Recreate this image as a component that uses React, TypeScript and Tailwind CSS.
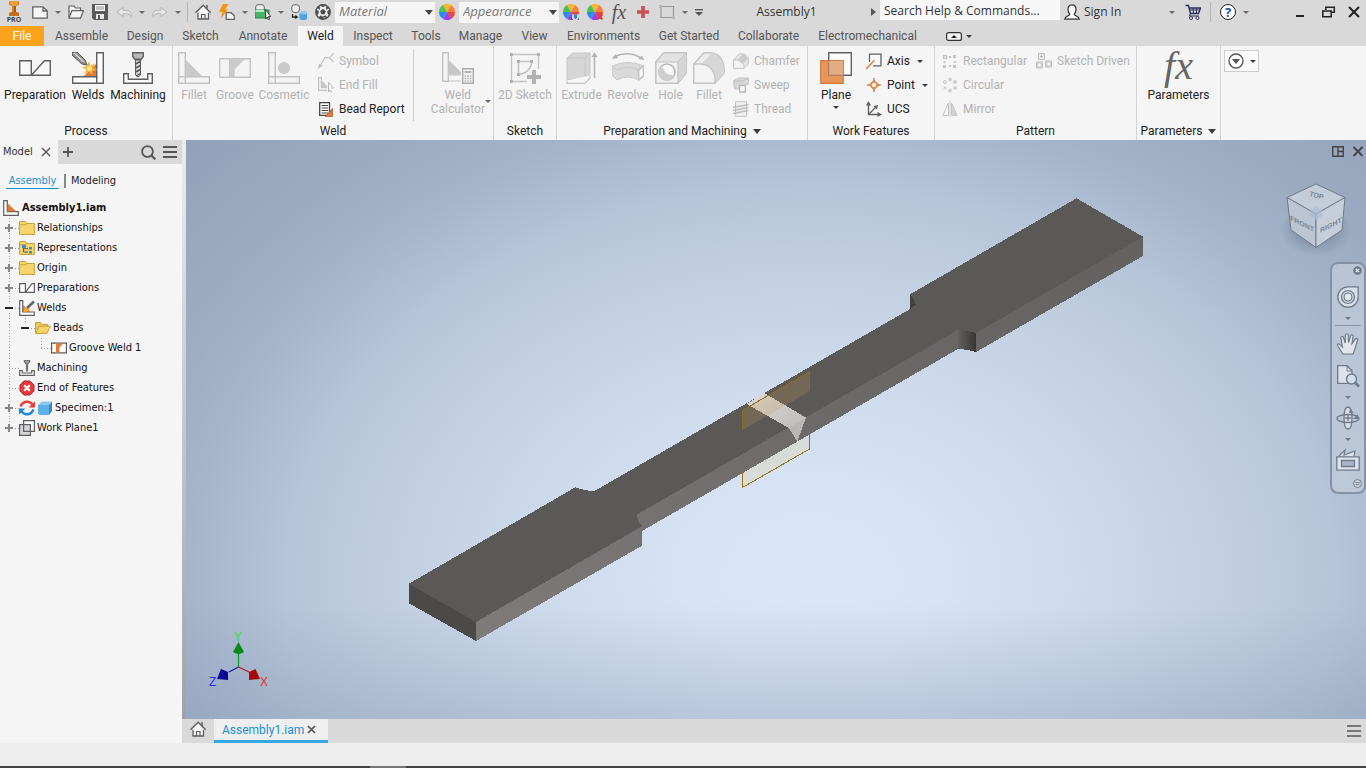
import React from "react";

type IconProps = { w?: number; h?: number; className?: string; children?: React.ReactNode };

const Svg = ({ w = 16, h = 16, className = "", children }: IconProps) => (
  <svg width={w} height={h} viewBox={`0 0 ${w} ${h}`} fill="none" aria-hidden="true" className={`block shrink-0 ${className}`}>
    {children}
  </svg>
);

const Caret = ({ big = false, color = "#3c3c3c" }: { big?: boolean; color?: string }) =>
  big ? (
    <Svg w={8} h={5}><path d="M0 0H8L4 5Z" fill={color} /></Svg>
  ) : (
    <Svg w={6} h={3}><path d="M0 0H6L3 3Z" fill={color} /></Svg>
  );

const G = "#5f5f5f";
const D = "#c3c3c3";

/* ---------- quick access icons ---------- */

const LogoIcon = () => (
  <div className="flex w-7 flex-col items-center">
    <Svg w={12} h={15}>
      <path d="M1 0H11V4L8 5V11L11 12V15H1V12L4 11V5L1 4Z" fill="#d9822b" />
      <path d="M1 0H11L8 5H4Z" fill="#ef9d3e" />
      <path d="M6 5H8V11H6Z" fill="#a85a14" />
      <path d="M1 12L4 11H8L11 12V15H1Z" fill="#c56f1c" />
    </Svg>
    <span className="text-[7px] font-bold leading-[7px] text-[#444]">PRO</span>
  </div>
);
const NewIcon = () => <Svg><path d="M.8 2.8H11L15.2 7V14.2H.8Z" fill="#f5f5f5" stroke={G} strokeWidth="1.3" /><path d="M11 3V7H15" stroke={G} strokeWidth="1.3" /></Svg>;
const OpenIcon = () => <Svg><path d="M1 14V2H6L7.5 4H12.5V6.5" fill="#f5f5f5" stroke={G} strokeWidth="1.2" /><path d="M1 14.2L4 6.6H15.5L12.5 14.2Z" fill="#f5f5f5" stroke={G} strokeWidth="1.2" /></Svg>;
const SaveIcon = () => (
  <Svg><path d="M0 0H16V16H2L0 14Z" fill="#5a5a5a" /><path d="M3 1H13V7H3Z" fill="#fff" /><path d="M4 3H12M4 5H12" stroke="#888" /><path d="M4 10H12V15H4Z" fill="#ececec" /><path d="M6 11H8V15H6Z" fill="#5a5a5a" /></Svg>
);
const UndoIcon = ({ flip = false }: { flip?: boolean }) => (
  <Svg className={flip ? "-scale-x-100" : ""}><path d="M1 8L7 3.5V6.3H11Q15.3 6.5 15.3 12.5Q13 9.8 11 9.8H7V12.5Z" fill="#e6e6e6" stroke="#b4b4b4" /></Svg>
);
const HomeIcon = () => (
  <Svg><path d="M3 8V15H13.5V8" fill="#f5f5f5" stroke={G} strokeWidth="1.3" /><path d="M.5 8.8L8.2 1.2L15.7 8.8" fill="#f5f5f5" stroke={G} strokeWidth="1.4" /><path d="M12 1V5" stroke={G} strokeWidth="1.5" /><path d="M6.5 15V10.5H10V15" stroke={G} strokeWidth="1.2" /></Svg>
);
const UpdateIcon = () => (
  <Svg><path d="M4 0H9.5L6 5.5H9L1.5 15L3.5 8H0Z" fill="#f9930f" /><path d="M7.2 8.7H12L15.3 11.5V15.3H7.2Z" fill="#f5f5f5" stroke={G} strokeWidth="1.2" /></Svg>
);
const SelectIcon = () => (
  <Svg><rect x=".7" y=".7" width="8.6" height="9" rx="2.5" fill="#eee" stroke={G} /><rect x="0" y="6" width="14" height="8" fill="#45b56b" stroke="#2d8d4d" /><path d="M.5 6H9V8H.5Z" fill="#bfe3cb" /><path d="M10.5 5.5V15L12.2 13L13.5 16L14.6 15.3L13.4 12.5H15.8Z" fill="#fff" stroke="#333" strokeWidth=".9" /></Svg>
);
const ReplaceIcon = () => (
  <Svg><rect x=".8" y=".8" width="7.6" height="7.6" rx="2.5" fill="#f0f0f0" stroke={G} /><path d="M1.5 10V13H5" stroke="#222" strokeWidth="1.3" /><path d="M4.3 10.8L7.3 13L4.3 15.2Z" fill="#222" /><rect x="8.5" y="7.5" width="7.5" height="8.5" rx="2" fill="#4fa3e0" /><ellipse cx="12.3" cy="8.7" rx="3.6" ry="1.5" fill="#92c9f2" /></Svg>
);
const BallIcon = () => (
  <Svg><circle cx="8" cy="8" r="7.2" fill="#f2f2f2" stroke="#4a4a4a" strokeWidth="1.4" /><path d="M8 5.3L10.4 7L9.5 10H6.5L5.6 7ZM5.5 1.2L8 3L10.5 1.2ZM1.2 6L3.4 7.2L3 10L1.6 10.5ZM14.8 6L12.6 7.2L13 10L14.4 10.5ZM4 13.6L5.5 11.7L8 13L8.2 15.2ZM12 13.6L10.5 11.7L8 13ZM2.6 3L5 3.6L4.2 5.6ZM13.4 3L11 3.6L11.8 5.6Z" fill="#4a4a4a" stroke="#4a4a4a" strokeWidth=".7" /></Svg>
);
const Wheel = ({ badge }: { badge?: "down" | "x" }) => (
  <Svg>
    <path d="M8 8L4 1.1A8 8 0 0 1 12 1.1Z" fill="#f8b62d" />
    <path d="M8 8L12 1.1A8 8 0 0 1 16 8Z" fill="#f5813f" />
    <path d="M8 8H16A8 8 0 0 1 12 14.9Z" fill="#e9483f" />
    <path d="M8 8L12 14.9A8 8 0 0 1 4 14.9Z" fill="#9a3df0" />
    <path d="M8 8L4 14.9A8 8 0 0 1 0 8Z" fill="#2e8ceb" />
    <path d="M8 8H0A8 8 0 0 1 4 1.1Z" fill="#4cc356" />
    {badge === "down" && <><path d="M9 10.5H16V16H9Z" fill="#d9d9d9" /><path d="M11 10.5H14V13.5L12.5 15.5L11 13.5Z" fill="#1f88d9" /><path d="M8.5 13.5V15.5H10M16 13.5V15.5H14.8" stroke="#555" /></>}
    {badge === "x" && <path d="M10.5 10.5L15.3 15.3M15.3 10.5L10.5 15.3" stroke="#e53935" strokeWidth="2" />}
  </Svg>
);
const AddIcon = () => <Svg><path d="M6.2 2H9.8V6.2H14V9.8H9.8V14H6.2V9.8H2V6.2H6.2Z" fill="#c9504e" /></Svg>;
const RectIcon = () => <Svg><path d="M2 2.5H14.5V13.5H2Z" stroke="#9a9a9a" strokeWidth="1.2" /><path d="M0 1H3.5V4H0ZM13 12.5H16V15H13Z" fill="#b8b8b8" /></Svg>;
const CartIcon = () => <Svg><path d="M.5 1.5H3.5L5.5 9.5H13.5L15.5 4H4.2" stroke="#27305c" strokeWidth="1.4" /><path d="M5 6H15M8 4L8.5 9M11.5 4V9M5.5 9.5L4.5 12H14" stroke="#27305c" /><circle cx="6" cy="14" r="1.5" fill="#fff" stroke="#27305c" /><circle cx="12.5" cy="14" r="1.5" fill="#fff" stroke="#27305c" /></Svg>;
const UserIcon = () => <Svg><path d="M8 .8C11 .8 12 3 12 5.5C12 8 10.7 9.3 10.3 10.3C10.5 11.8 15 12 15.3 15.2H.7C1 12 5.5 11.8 5.7 10.3C5.3 9.3 4 8 4 5.5C4 3 5 .8 8 .8Z" fill="#fafafa" stroke="#333" strokeWidth="1.2" /></Svg>;

/* ---------- ribbon icons, 32px ---------- */

const PreparationIcon = () => <Svg w={32} h={32}><path d="M.7 8.7H12.3V23.3H.7ZM12.3 23.3L25.5 8.7H31.3V23.3Z" fill="#f8f8f8" stroke={G} strokeWidth="1.4" /></Svg>;
const WeldsIcon = () => (
  <Svg w={32} h={32}>
    <path d="M24.7.7H31.3V31.3H.7V24.7H24.7Z" fill="#fafafa" stroke={G} strokeWidth="1.4" /><path d="M24.7 24.7V31" stroke={G} strokeWidth="1.4" />
    <path d="M24 12V24H12Z" fill="#e07b35" />
    <path d="M17 9L18.5 14L23 11L21 15.5L25 18L20.5 18.5L20 23L17 19.5L12 22L14.5 17.5L10 15.5L15 14Z" fill="#fbb324" />
    <circle cx="17.5" cy="16.5" r="2.5" fill="#ffe89a" />
    <path d="M0 0H5L13 8L15 13L10 12L0 3Z" fill="#8e8e8e" stroke="#555" /><path d="M2 1L12 10" stroke="#d6d6d6" strokeWidth="1.5" />
  </Svg>
);
const MachiningIcon = () => (
  <Svg w={32} h={32}>
    <path d="M1.7 21.7H6.3V27.3H25.7V21.7H30.3V31.3H1.7Z" fill="#fafafa" stroke={G} strokeWidth="1.4" />
    <path d="M10.7.7H21.3V4.5L19.3 7.3H12.7L10.7 4.5Z" fill="#b9b9b9" stroke={G} strokeWidth="1.4" />
    <path d="M13.5 8H18.5V23L16 25L13.5 23Z" fill="#d4d4d4" stroke={G} /><path d="M13.5 12L18.5 9.5M13.5 16L18.5 13.5M13.5 20L18.5 17.5M14 24L18.5 21.5" stroke="#555" strokeWidth="1.4" />
  </Svg>
);
const FilletIcon = () => <Svg w={32} h={32}><path d="M.7.7H7.3V24.7H31.3V31.3H.7Z" fill="#f4f4f4" stroke={D} strokeWidth="1.4" /><path d="M.7 24.7H7.3V31" stroke={D} strokeWidth="1.4" /><path d="M8 8L24 24H8Z" fill="#cacaca" /></Svg>;
const GrooveIcon = () => <Svg w={32} h={32}><path d="M.7 6.7H31.3V25.3H.7Z" fill="#f4f4f4" stroke={D} strokeWidth="1.4" /><path d="M10 7H25L15 17V25H10Z" fill="#cacaca" /><path d="M10.5 7V25M25.5 7L15 17.5V25" stroke={D} /></Svg>;
const CosmeticIcon = () => <Svg w={32} h={32}><path d="M.7.7H7.3V24.7H31.3V31.3H.7Z" fill="#f4f4f4" stroke={D} strokeWidth="1.4" /><path d="M.7 24.7H7.3V31" stroke={D} strokeWidth="1.4" /><circle cx="16" cy="16" r="6" fill="#cacaca" /></Svg>;
const CalculatorIcon = () => (
  <Svg w={32} h={32}><path d="M.7.7H6.3V29.3H.7Z" fill="#f4f4f4" stroke={D} strokeWidth="1.4" /><path d="M6.3 7.5L19 20V22.5H6.3Z" fill="#c6c6c6" /><path d="M6.3 23H19M6.3 29H19" stroke={D} strokeWidth="1.2" /><path d="M20.7 16.7H31.3V31.3H20.7Z" fill="#f4f4f4" stroke="#aaa" strokeWidth="1.4" /><path d="M22.5 20H29.5" stroke="#b5b5b5" strokeWidth="2" /><path d="M22.6 24H29.8M22.6 26.5H29.8M22.6 29H29.8" stroke="#b5b5b5" strokeWidth="1.6" strokeDasharray="1.6 1" /></Svg>
);
const SketchIcon = () => (
  <Svg w={32} h={32}><path d="M2.5 2.5H29.5V17M2.5 2.5V29.5H18" stroke={D} strokeWidth="1.3" /><path d="M1 1H4V4H1ZM28 1H31V4H28ZM1 28H4V31H1Z" fill="#b2b2b2" /><path d="M9.5 9.5H22.5V12Q21 20 11 22.5H9.5Z" stroke={D} strokeWidth="1.5" /><path d="M8 8H11V11H8ZM21 8H24V11H21ZM8 21H11V24H8Z" fill="#b2b2b2" /><path d="M23 18H27V23H32V27H27V32H23V27H18V23H23Z" fill="#b2b2b2" /></Svg>
);
const ExtrudeIcon = () => (
  <Svg w={32} h={32}><path d="M1 6L7 1H24V22L19 27.5H1Z" fill="#d6d6d6" stroke="#c6c6c6" /><path d="M1 6H19L24 1M19 6V27" stroke="#c6c6c6" /><path d="M1 28.5V31.3H19L24 26V23.5" fill="#f7f7f7" stroke={D} strokeWidth="1.2" /><path d="M28.5 26V4" stroke="#b2b2b2" strokeWidth="1.6" /><path d="M28.5 0L31.5 5H25.5Z" fill="#b2b2b2" /></Svg>
);
const RevolveIcon = () => (
  <Svg w={32} h={32}><path d="M2 5Q16-2 29 6" stroke="#b4b4b4" strokeWidth="1.6" /><path d="M0 6.5L3.5 2L6 6.5ZM32 8L26.5 7L30 3.5Z" fill="#b4b4b4" /><path d="M0 14Q16 7 32 14L31 25L27 28Q16 22 5 28L0 23Z" fill="#dadada" stroke="#c9c9c9" /><path d="M0 14L5 18Q16 13 26.5 18L32 13" stroke="#c9c9c9" /><path d="M26.7 18L31.3 14V24L26.7 28Z" fill="#fafafa" stroke={D} strokeWidth="1.4" /></Svg>
);
const HoleIcon = () => (
  <Svg w={32} h={32}><path d="M.8 10L8.5.8H31.2V21L23 31.2H.8Z" fill="#e2e2e2" stroke={D} strokeWidth="1.4" /><path d="M23 10L31 1V21L23 31Z" fill="#d6d6d6" /><path d="M1 10H23V31H1Z" fill="#f1f1f1" stroke={D} strokeWidth="1.2" /><path d="M23 10L31 1" stroke={D} /><circle cx="12" cy="20" r="8" fill="#fafafa" stroke="#b8b8b8" strokeWidth="1.6" /><path d="M7 14A8 8 0 1 0 19 23Q10 24 7 14Z" fill="#cfcfcf" /></Svg>
);
const Fillet3dIcon = () => (
  <Svg w={32} h={32}><path d="M.8 12L11 .8H16Q30 1 31.2 17V21L22 31.2H.8Z" fill="#ececec" stroke={D} strokeWidth="1.4" /><path d="M11 1H16Q30 1 31 18V21L22 31V26Q21 13 9 11.5L18 2Z" fill="#d6d6d6" /><path d="M.8 12H8Q21 13 22 27V31.2H.8Z" fill="#f3f3f3" stroke={D} strokeWidth="1.3" /></Svg>
);
const PlaneIcon = () => (
  <Svg w={32} h={32}><path d="M8.7.7H31.3V23.3H8.7Z" fill="#fff" stroke={G} strokeWidth="1.4" /><path d="M.7 8.7H23.3V31.3H.7Z" fill="#e89558" stroke="#cf7b3d" strokeWidth="1.2" /><path d="M9 9H23V23H9Z" fill="#e2ac85" /><path d="M8.7 8.7V23.3H23.3" stroke="#9a7b66" /></Svg>
);

/* ---------- ribbon icons, 16px ---------- */

const SymbolIcon = () => <Svg><path d="M1.5 14L7 4.7H11.5M15.5.5L11.5 4.7L15.5 9" stroke={D} strokeWidth="1.2" /><path d="M0 16L1 10.5L4.8 12.8Z" fill={D} /></Svg>;
const EndFillIcon = () => <Svg><path d="M.6.6H3.4V10.6H9M.6.6V13.4H9" stroke={D} strokeWidth="1.2" /><path d="M3.5 3L10 10H3.5Z" fill="#c8c8c8" /><path d="M10.5 5.5V15L12.3 13L13.5 15.8M10.5 5.5L15.3 11H13" fill="#fff" stroke="#b5b5b5" /></Svg>;
const BeadIcon = () => <Svg><path d="M1.7 1.7H11.5V14.3H1.7Z" fill="#fff" stroke="#444" strokeWidth="1.3" /><path d="M3.5 4.5H10M3.5 7H10M3.5 9.5H10M3.5 12H10" stroke="#444" strokeWidth="1.2" /><path d="M14.5 7.5V15.5H7.5Z" fill="#e07b35" stroke="#a95012" strokeWidth=".7" /></Svg>;
const ChamferIcon = () => <Svg><path d="M.7 7L6 1H11.5L15.3 5V11L11 15.3H.7Z" fill="#e6e6e6" stroke={D} /><path d="M4 7L10.5 1L15 5L11 10Z" fill="#cbcbcb" /><path d="M.7 7H5L11 11.5V15.3H.7Z" fill="#f4f4f4" stroke={D} /></Svg>;
const SweepIcon = () => <Svg><path d="M.5 4L5 1H15.5V7L10 8H6V12H1.5Z" fill="#d6d6d6" stroke="#c6c6c6" /><path d="M.5 4H9L15 1.5" stroke="#c0c0c0" /><path d="M6.6 8.6H12.4V15H6.6Z" fill="#f7f7f7" stroke="#b8b8b8" strokeWidth="1.3" /></Svg>;
const ThreadIcon = () => <Svg><path d="M2.5.7H13.5V15.3H2.5Z" fill="#f0f0f0" stroke={D} /><path d="M0 6.5L15.5 3.5M0 9.5L15.5 6.5M0 12.5L15.5 9.5" stroke="#bdbdbd" strokeWidth="1.5" /></Svg>;
const AxisIcon = () => <Svg><path d="M3.5 9V1.2H15V12.8H7" fill="#fafafa" stroke={G} strokeWidth="1.3" /><path d="M0 16L8.5 7.2" stroke="#e07b35" strokeWidth="1.5" /></Svg>;
const PointIcon = () => <Svg><path d="M8 1V15M1 8H15" stroke="#d9803f" strokeWidth="1.4" /><path d="M8 3.2L12.8 8L8 12.8L3.2 8Z" fill="#e89558" stroke="#cf7b3d" /><path d="M6.3 6.3H9.7V9.7H6.3Z" fill="#fff" /></Svg>;
const UcsIcon = () => <Svg><path d="M2.5 3V13.5H13" stroke={G} strokeWidth="1.4" /><path d="M2.5 0L5 4.5H0ZM16 13.5L11.5 16V11ZM12 4L11 8.5L7.5 5Z" fill={G} /><path d="M3 13L10 6" stroke={G} strokeWidth="1.3" /></Svg>;
const RectPatternIcon = () => <Svg><path d="M1.6 2.6H4.4V5.4H1.6Z" stroke={D} strokeWidth="1.3" /><path d="M7 3H9V5H7ZM11 2H14V5H11ZM1.5 8H3.5V10H1.5ZM1 12H4V15H1ZM7 12H9V14H7ZM11 12H14V15H11ZM12 8H14V10H12Z" fill="#c6c6c6" /></Svg>;
const CircPatternIcon = () => <Svg><circle cx="8" cy="2.5" r="2" fill="#cfcfcf" /><circle cx="13" cy="5" r="2" fill="#cfcfcf" /><circle cx="13" cy="11" r="2" fill="#cfcfcf" /><circle cx="8" cy="13.5" r="2" fill="#cfcfcf" /><circle cx="3" cy="11" r="1.6" fill="#cfcfcf" /><circle cx="3" cy="5" r="1.5" stroke={D} /></Svg>;
const MirrorIcon = () => <Svg><path d="M6.5 2V14.4H.9Z" fill="#f6f6f6" stroke={D} /><path d="M9.5 2V14.4H15.1Z" fill="#d3d3d3" stroke={D} /><path d="M8 0V16" stroke="#cfcfcf" /></Svg>;
const SketchDrivenIcon = () => <Svg><path d="M2.6.6H8.4V6.4H2.6Z" fill="#fafafa" stroke={D} strokeWidth="1.2" /><path d="M5.5 2V5M4 3.5H7" stroke="#b5b5b5" /><path d="M.5 9H6.5V15H.5ZM9.5 8H15.5V14H9.5Z" fill="#d3d3d3" stroke={D} /><path d="M3.5 10.5V13.5M2 12H5M12.5 9.5V12.5M11 11H14" stroke="#fff" /></Svg>;

/* ---------- browser tree icons ---------- */

const AsmIcon = () => <Svg><path d="M.7.7H4.3V11.7H15.3V15.3H.7Z" fill="#fff" stroke={G} strokeWidth="1.2" /><path d="M4.8 3.5L13 11.3H4.8Z" fill="#e07b35" /></Svg>;
const FolderIcon = ({ rep = false }: { rep?: boolean }) => (
  <Svg><path d="M.6 1.6H6.5L8 3.5H15.4V14.4H.6Z" fill="#f6d56a" stroke="#c9a13a" /><path d="M.6 4.8H6.5L8 3.5" stroke="#c9a13a" />{rep && <><path d="M4.5 6.5V12H9M4.5 8.7H9" stroke="#555" /><path d="M3 5H7V8H3ZM10 7H13V9.5H10ZM10 11H13V13.5H10Z" fill="#3a8fd0" /></>}</Svg>
);
const OpenFolderIcon = () => <Svg><path d="M.6 13.4V2.6H5.5L7 4.4H12.5V6.5" fill="#edc75a" stroke="#c9a13a" /><path d="M.8 13.4L4.2 6.2H15.3L11.9 13.4Z" fill="#f6d56a" stroke="#c9a13a" /></Svg>;
const PrepSmallIcon = () => <Svg><path d="M.6 3.6H6.4V12.4H.6ZM6.4 12.4L13 3.6H15.4V12.4Z" fill="#fff" stroke={G} strokeWidth="1.2" /></Svg>;
const WeldSmallIcon = () => <Svg><path d="M.7.7H3.7V12H15.3V15.3H.7Z" fill="#fff" stroke={G} strokeWidth="1.2" /><path d="M4 5L12 12H4Z" fill="#e07b35" /><path d="M6 6L7 9L11 8L9 11L5 12Z" fill="#fbb324" /><path d="M8 8L15 1.5" stroke="#666" strokeWidth="2.6" /></Svg>;
const GrooveSmallIcon = () => <Svg><path d="M.6 3.1H15.4V12.9H.6Z" fill="#fff" stroke={G} strokeWidth="1.2" /><path d="M5 3.5H12L8.5 7.5V12.5H5Z" fill="#e07b35" /></Svg>;
const MachSmallIcon = () => <Svg><path d="M.7 10.7H3.3V13H12.7V10.7H15.3V15.4H.7Z" fill="#fff" stroke={G} strokeWidth="1.2" /><path d="M5 .7H11L9.8 3.3H6.2Z" fill="#aaa" stroke={G} /><path d="M8 4V11.5" stroke="#777" strokeWidth="2.4" /></Svg>;
const EndIcon = () => <Svg><path d="M5 1H11L15 5V11L11 15H5L1 11V5Z" fill="#e5393b" stroke="#b92426" /><path d="M5.2 5.2L10.8 10.8M10.8 5.2L5.2 10.8" stroke="#fff" strokeWidth="2.2" /></Svg>;
const AdaptiveIcon = () => <Svg><path d="M1.5 6.5Q4 1 9 1.8Q12 2.4 13.5 4.5" stroke="#ef3b36" strokeWidth="2.4" /><path d="M16 1.5V7.5H9.5Z" fill="#ef3b36" /><path d="M14.5 9.5Q12 15 7 14.2Q4 13.6 2.5 11.5" stroke="#1f86d8" strokeWidth="2.4" /><path d="M0 14.5V8.5H6.5Z" fill="#1f86d8" /></Svg>;
const CubeIcon = () => <Svg><path d="M1 5L4.5 1.5H15L12 5Z" fill="#8ccaf0" /><path d="M1 5H12V15H3L1 13.5Z" fill="#5db1e6" /><path d="M12 5L15 1.5V11L12 15Z" fill="#3c88bf" /></Svg>;
const WorkPlaneIcon = () => <Svg><path d="M4.6.6H15.4V11.4H4.6Z" fill="#fafafa" stroke={G} strokeWidth="1.2" /><path d="M.6 4.6H11.4V15.4H.6Z" fill="#cfcfd2" fillOpacity=".85" stroke={G} strokeWidth="1.2" /><path d="M4.6 4.6V11.4H11.4" stroke={G} strokeWidth="1.2" /></Svg>;

/* ---------- shared controls ---------- */

const QuickButton = ({ label, children }: { label: string; children: React.ReactNode }) => (
  <button type="button" aria-label={label} className="flex h-6 w-6 shrink-0 items-center justify-center">{children}</button>
);
const QuickCaret = ({ label }: { label: string }) => (
  <button type="button" aria-label={label} className="flex h-6 w-3 shrink-0 items-center justify-center"><Caret color="#6a6a6a" /></button>
);

const Combo = ({ label }: { label: string }) => (
  <label className="relative flex h-[21px] w-[100px] shrink-0 items-center bg-[#f5f5f5]">
    <select aria-label={label} className="h-full w-full appearance-none bg-transparent px-1 font-['Open_Sans',sans-serif] text-[13px] italic text-[#7a7a7a] outline-none">
      <option>{label}</option>
    </select>
    <span className="pointer-events-none absolute right-0.5"><Caret big color="#444" /></span>
  </label>
);

const BigButton = ({ label, width, disabled = false, caret = false, children }: { label: string; width: string; disabled?: boolean; caret?: boolean; children: React.ReactNode }) => (
  <button type="button" disabled={disabled} className={`flex shrink-0 flex-col items-center pt-1.5 ${width} ${disabled ? "text-[#b3b3b3]" : "text-[#222]"}`}>
    {children}
    <span className="mt-1 whitespace-nowrap leading-[14px]">{label}</span>
    {caret && <span className="mt-1"><Caret /></span>}
  </button>
);

const SmallButton = ({ label, disabled = false, caret = false, children }: { label: string; disabled?: boolean; caret?: boolean; children: React.ReactNode }) => (
  <button type="button" disabled={disabled} className={`flex h-6 items-center gap-[5px] whitespace-nowrap ${disabled ? "text-[#b3b3b3]" : "text-[#222]"}`}>
    {children}
    <span>{label}</span>
    {caret && <span className="ml-0.5"><Caret /></span>}
  </button>
);

const Panel = ({ label, width, caret = false, children }: { label: string; width: string; caret?: boolean; children: React.ReactNode }) => (
  <section aria-label={label} className={`flex shrink-0 flex-col border-r border-[#d4d4d4] ${width}`}>
    <div className="flex flex-1">{children}</div>
    <div className="flex h-[18px] items-center justify-center gap-1.5 text-[#222]">
      {label}
      {caret && <Caret big />}
    </div>
  </section>
);

const SmallColumn = ({ className = "", children }: { className?: string; children: React.ReactNode }) => (
  <div className={`flex flex-col items-start pt-[3px] ${className}`}>{children}</div>
);

/* ---------- page sections ---------- */

const TitleBar = () => (
  <header className="flex h-6 items-center bg-[#d9d9d9] font-['Open_Sans','Noto_Sans',sans-serif] text-[12px] text-[#333]">
    <LogoIcon />
    <QuickButton label="New"><NewIcon /></QuickButton>
    <QuickCaret label="New options" />
    <QuickButton label="Open"><OpenIcon /></QuickButton>
    <QuickButton label="Save"><SaveIcon /></QuickButton>
    <QuickButton label="Undo"><UndoIcon /></QuickButton>
    <QuickCaret label="Undo history" />
    <QuickButton label="Redo"><UndoIcon flip /></QuickButton>
    <QuickCaret label="Redo history" />
    <span className="mx-[3px] h-5 w-px bg-[#b4b4b4]" />
    <QuickButton label="Home"><HomeIcon /></QuickButton>
    <QuickButton label="Update"><UpdateIcon /></QuickButton>
    <QuickCaret label="Update options" />
    <QuickButton label="Select"><SelectIcon /></QuickButton>
    <QuickCaret label="Select options" />
    <QuickButton label="Replace"><ReplaceIcon /></QuickButton>
    <QuickButton label="Physical material"><BallIcon /></QuickButton>
    <Combo label="Material" />
    <QuickButton label="Appearance browser"><Wheel /></QuickButton>
    <Combo label="Appearance" />
    <QuickButton label="Adjust appearance"><Wheel badge="down" /></QuickButton>
    <QuickButton label="Clear appearance"><Wheel badge="x" /></QuickButton>
    <button type="button" aria-label="Parameters" className="w-6 shrink-0 text-center font-['Liberation_Serif',serif] text-[20px] italic leading-5 text-[#555]">fx</button>
    <QuickButton label="Add"><AddIcon /></QuickButton>
    <QuickButton label="Window selection"><RectIcon /></QuickButton>
    <QuickCaret label="Selection options" />
    <button type="button" aria-label="Customize" className="flex h-6 w-4 items-center justify-center"><Svg w={8} h={7}><path d="M0 .7H8" stroke="#555" strokeWidth="1.4" /><path d="M0 3H8L4 7Z" fill="#555" /></Svg></button>
    <h1 className="flex-1 text-center">Assembly1</h1>
    <button type="button" aria-label="Expand search" className="flex w-[14px] justify-center"><Svg w={5} h={8}><path d="M0 0L5 4L0 8Z" fill="#555" /></Svg></button>
    <input aria-label="Search help and commands" placeholder="Search Help & Commands..." className="h-5 w-[180px] shrink-0 self-start bg-[#f7f7f7] px-1 outline-none placeholder:text-[#333]" />
    <button type="button" className="ml-1 flex w-[102px] items-center gap-1 whitespace-nowrap"><UserIcon />Sign In</button>
    <QuickCaret label="Account options" />
    <span className="w-[3px]" />
    <QuickButton label="App store"><CartIcon /></QuickButton>
    <span className="mx-[5px] h-5 w-px bg-[#b4b4b4]" />
    <button type="button" aria-label="Help" className="flex h-6 w-6 items-center justify-center">
      <span className="flex h-4 w-4 items-center justify-center rounded-full border border-[#222] bg-white text-[13px] font-bold leading-3 text-[#1d4fb8]">?</span>
    </button>
    <QuickCaret label="Help options" />
    <div className="ml-[38px] flex w-[76px] items-center justify-between pr-1.5 pl-1">
      <button type="button" aria-label="Minimize"><Svg w={16} h={12}><path d="M2 10H10" stroke="#222" strokeWidth="2" /></Svg></button>
      <button type="button" aria-label="Restore"><Svg w={14} h={12}><path d="M3.8 4V1.2H12.3V6.2H10" stroke="#222" strokeWidth="1.5" /><path d="M.8 5H9.2V10.8H.8Z" stroke="#222" strokeWidth="1.5" /></Svg></button>
      <button type="button" aria-label="Close"><Svg w={12} h={12}><path d="M1 1L11 11M11 1L1 11" stroke="#222" strokeWidth="2" /></Svg></button>
    </div>
  </header>
);

const tabs: [string, string][] = [
  ["Assemble", "w-[71px]"], ["Design", "w-[56px]"], ["Sketch", "w-[55px]"], ["Annotate", "w-[70px]"], ["Weld", "w-[45px]"],
  ["Inspect", "w-[60px]"], ["Tools", "w-[46px]"], ["Manage", "w-[63px]"], ["View", "w-[45px]"], ["Environments", "w-[93px]"],
  ["Get Started", "w-[78px]"], ["Collaborate", "w-[81px]"], ["Electromechanical", "w-[117px]"],
];

const RibbonTabs = () => (
  <nav aria-label="Ribbon tabs" className="flex h-[22px] items-end bg-[#d9d9d9] text-[12px] text-[#555]">
    <button type="button" className="mr-0.5 h-5 w-11 bg-[#fba21c] text-white">File</button>
    {tabs.map(([name, width]) => (
      <button key={name} type="button" className={`h-5 shrink-0 whitespace-nowrap ${width} ${name === "Weld" ? "bg-[#f5f5f5] text-[#222]" : ""}`}>{name}</button>
    ))}
    <button type="button" aria-label="Minimize ribbon" className="ml-5 flex h-5 items-center gap-1">
      <Svg w={16} h={9}><rect x=".6" y=".6" width="14.8" height="7.8" rx="2" fill="#f5f5f5" stroke="#333" strokeWidth="1.2" /><path d="M5 6L8 3L11 6Z" fill="#222" /></Svg>
      <Caret />
    </button>
  </nav>
);

const Ribbon = () => (
  <div className="flex h-[94px] shrink-0 bg-[#f5f5f5] text-[12px]">
    <Panel label="Process" width="w-[173px]">
      <BigButton label="Preparation" width="w-[70px]"><PreparationIcon /></BigButton>
      <BigButton label="Welds" width="w-9"><WeldsIcon /></BigButton>
      <BigButton label="Machining" width="w-16"><MachiningIcon /></BigButton>
    </Panel>
    <Panel label="Weld" width="w-[321px]">
      <BigButton label="Fillet" width="w-[42px]" disabled><FilletIcon /></BigButton>
      <BigButton label="Groove" width="w-10" disabled><GrooveIcon /></BigButton>
      <BigButton label="Cosmetic" width="w-[58px]" disabled><CosmeticIcon /></BigButton>
      <SmallColumn className="w-[100px] pl-[5px]">
        <SmallButton label="Symbol" disabled><SymbolIcon /></SmallButton>
        <SmallButton label="End Fill" disabled><EndFillIcon /></SmallButton>
        <SmallButton label="Bead Report"><BeadIcon /></SmallButton>
      </SmallColumn>
      <span className="mt-[3px] h-[72px] w-px bg-[#cfcfcf]" />
      <button type="button" disabled className="flex w-[77px] items-start justify-end text-[#b3b3b3]">
        <span className="flex flex-col items-center pt-1.5">
          <CalculatorIcon />
          <span className="mt-1 leading-[14px]">Weld</span>
          <span className="leading-[14px]">Calculator</span>
        </span>
        <span className="mt-[54px]"><Caret color="#666" /></span>
      </button>
    </Panel>
    <Panel label="Sketch" width="w-[63px]">
      <BigButton label="2D Sketch" width="w-[62px]" disabled><SketchIcon /></BigButton>
    </Panel>
    <Panel label="Preparation and Machining" width="w-[251px]" caret>
      <BigButton label="Extrude" width="w-[49px]" disabled><ExtrudeIcon /></BigButton>
      <BigButton label="Revolve" width="w-11" disabled><RevolveIcon /></BigButton>
      <BigButton label="Hole" width="w-[41px]" disabled><HoleIcon /></BigButton>
      <BigButton label="Fillet" width="w-9" disabled><Fillet3dIcon /></BigButton>
      <SmallColumn className="pl-1.5">
        <SmallButton label="Chamfer" disabled><ChamferIcon /></SmallButton>
        <SmallButton label="Sweep" disabled><SweepIcon /></SmallButton>
        <SmallButton label="Thread" disabled><ThreadIcon /></SmallButton>
      </SmallColumn>
    </Panel>
    <Panel label="Work Features" width="w-[127px]">
      <BigButton label="Plane" width="w-14" caret><PlaneIcon /></BigButton>
      <SmallColumn className="pl-0.5">
        <SmallButton label="Axis" caret><AxisIcon /></SmallButton>
        <SmallButton label="Point" caret><PointIcon /></SmallButton>
        <SmallButton label="UCS"><UcsIcon /></SmallButton>
      </SmallColumn>
    </Panel>
    <Panel label="Pattern" width="w-[202px]">
      <SmallColumn className="w-[101px] pl-[7px]">
        <SmallButton label="Rectangular" disabled><RectPatternIcon /></SmallButton>
        <SmallButton label="Circular" disabled><CircPatternIcon /></SmallButton>
        <SmallButton label="Mirror" disabled><MirrorIcon /></SmallButton>
      </SmallColumn>
      <SmallColumn>
        <SmallButton label="Sketch Driven" disabled><SketchDrivenIcon /></SmallButton>
      </SmallColumn>
    </Panel>
    <Panel label="Parameters" width="w-[84px]" caret>
      <BigButton label="Parameters" width="w-[83px]">
        <span className="h-8 font-['Liberation_Serif',serif] text-[40px] italic leading-7 text-[#666]">fx</span>
      </BigButton>
    </Panel>
    <button type="button" aria-label="Panel options" className="mt-1 ml-[3px] flex h-[22px] w-[35px] items-center justify-center gap-1.5 border border-[#cdcdcd] bg-[#fafafa]">
      <Svg><circle cx="8" cy="8" r="7" stroke="#555" strokeWidth="1.3" /><path d="M4 6H12L8 11Z" fill="#555" /></Svg>
      <Caret />
    </button>
  </div>
);

type Mark = "plus" | "minus" | "none";

const Guide = ({ depth, mark, last = false }: { depth: number; mark: Mark; last?: boolean }) => {
  const width = 19 + depth * 16;
  const x = 9 + depth * 16;
  const dots = { stroke: "#9c9c9c", strokeDasharray: "1 2" };
  return (
    <Svg w={width} h={20}>
      <path d={last ? "M9.5 0V10" : "M9.5 0V20"} {...dots} />
      {depth > 0 && <path d={`M${x + 0.5} 0V10`} {...dots} />}
      <path d={`M${x} 10.5H${width}`} {...dots} />
      {mark !== "none" && <path d={`M${x - 4} 5H${x + 6}V15H${x - 4}Z`} fill="#f5f5f5" />}
      {mark === "plus" && <path d={`M${x - 4} 10H${x + 4}M${x} 6V14`} stroke="#868686" strokeWidth="2" />}
      {mark === "minus" && <path d={`M${x - 4} 10H${x + 4}`} stroke="#222" strokeWidth="2" />}
    </Svg>
  );
};

const tree: { label: string; depth: number; mark: Mark; icon: React.ReactNode; last?: boolean }[] = [
  { label: "Relationships", depth: 0, mark: "plus", icon: <FolderIcon /> },
  { label: "Representations", depth: 0, mark: "plus", icon: <FolderIcon rep /> },
  { label: "Origin", depth: 0, mark: "plus", icon: <FolderIcon /> },
  { label: "Preparations", depth: 0, mark: "plus", icon: <PrepSmallIcon /> },
  { label: "Welds", depth: 0, mark: "minus", icon: <WeldSmallIcon /> },
  { label: "Beads", depth: 1, mark: "minus", icon: <OpenFolderIcon /> },
  { label: "Groove Weld 1", depth: 2, mark: "none", icon: <GrooveSmallIcon /> },
  { label: "Machining", depth: 0, mark: "none", icon: <MachSmallIcon /> },
  { label: "End of Features", depth: 0, mark: "none", icon: <EndIcon /> },
  { label: "Specimen:1", depth: 0, mark: "plus", icon: <><AdaptiveIcon /><CubeIcon /></> },
  { label: "Work Plane1", depth: 0, mark: "plus", icon: <WorkPlaneIcon />, last: true },
];

const Browser = () => (
  <aside className="flex w-[182px] shrink-0 flex-col bg-[#f5f5f5] font-['DejaVu_Sans_Condensed','DejaVu_Sans',sans-serif] text-[11px] text-[#111]">
    <div className="flex h-6 items-center bg-[#d9d9d9] pr-[5px]">
      <div className="flex h-6 w-[58px] items-center gap-2 bg-[#f5f5f5] pl-[3px] text-[#333]">
        Model
        <button type="button" aria-label="Close model browser"><Svg w={10} h={10}><path d="M1 1L9 9M9 1L1 9" stroke="#555" strokeWidth="1.4" /></Svg></button>
      </div>
      <button type="button" aria-label="Add browser" className="ml-[5px]"><Svg w={10} h={10}><path d="M5 0V10M0 5H10" stroke="#555" strokeWidth="1.8" /></Svg></button>
      <button type="button" aria-label="Search" className="mr-[7px] ml-auto"><Svg w={15} h={15}><circle cx="6.5" cy="6.5" r="5.4" stroke="#555" strokeWidth="1.8" /><path d="M10.5 10.5L14.3 14.3" stroke="#555" strokeWidth="2.2" /></Svg></button>
      <button type="button" aria-label="Browser menu"><Svg w={14} h={12}><path d="M0 1H14M0 6H14M0 11H14" stroke="#555" strokeWidth="2" /></Svg></button>
    </div>
    <div className="flex h-[34px] items-center pl-1.5">
      <button type="button" className="w-[53px] border-b border-[#1a8fd0] text-center leading-[15px] text-[#1a8fd0]">Assembly</button>
      <span className="mx-[5px] h-[14px] w-0.5 bg-[#888]" />
      <button type="button" className="text-[#222]">Modeling</button>
    </div>
    <div className="flex h-5 items-center gap-[3px] pl-[3px] font-bold leading-5"><AsmIcon />Assembly1.iam</div>
    <ul>
      {tree.map((item) => (
        <li key={item.label} className="flex h-5 items-center gap-0.5 whitespace-nowrap leading-5">
          <span className="flex items-center gap-0.5">
            <span className="-mr-0.5"><Guide depth={item.depth} mark={item.mark} last={item.last} /></span>
            {item.icon}
          </span>
          {item.label}
        </li>
      ))}
    </ul>
  </aside>
);

const Scene = () => (
  <svg className="block h-full w-full" viewBox="186 140 1180 579" preserveAspectRatio="xMidYMid meet" role="img" aria-label="Welded tensile specimen">
    <defs>
      <linearGradient id="side" gradientUnits="userSpaceOnUse" x1="476" y1="640" x2="1143" y2="250">
        <stop offset="0" stopColor="#7e7b79" /><stop offset="0.5" stopColor="#6d6b6a" /><stop offset="1" stopColor="#646261" />
      </linearGradient>
      <linearGradient id="fillet" x1="0" x2="1" y1="0" y2="0"><stop offset="0" stopColor="#62615f" /><stop offset="1" stopColor="#373635" /></linearGradient>
      <linearGradient id="bead" x1="0" x2="1" y1="0" y2="1"><stop offset="0" stopColor="#dddbd9" /><stop offset="1" stopColor="#bdbbba" /></linearGradient>
    </defs>
    <g shapeRendering="crispEdges">
      <path d="M742.5 473L809.5 434V449L742.5 487.5Z" fill="#d8dcd9" />
      <path d="M742.5 470V487.5L809.5 449V430" fill="none" stroke="#9a7415" />
      <path d="M910 294.3L918 304L910 309Z" fill="#434240" />
      <path d="M636 514L958 329V349L642 531L636 520Z" fill="url(#side)" />
      <path d="M958 330Q967 330 976 333V352Q967 349 958 349Z" fill="url(#fillet)" />
      <path d="M976 332L1143 236V256L976 352Z" fill="url(#side)" />
      <path d="M476 621L642 525V545.7L476 641Z" fill="url(#side)" />
      <path d="M409 583L476 621V641L409 603.3Z" fill="#4b4a48" />
      <path d="M409 583.7L575.3 487.3Q585 491 594 491.3L911 308.5L915.7 304.7Q915 299 910 294.3L1076.5 198.3L1143 236.7L976 333Q967 330 958 330L637 514.5Q637 521 642 526.3L476 622Z" fill="#5a5957" />
      <path d="M746.7 404L764 392.7L806 417.7L788.7 428Z" fill="url(#bead)" />
      <path d="M806 417.7L797.3 441.3L788.7 428Z" fill="#bab8b7" />
      <path d="M742.5 410.3L809.5 371.7V391.3L742.5 430Z" fill="#c69a4e" fillOpacity="0.24" />
      <path d="M742.5 430V410.3L809.5 371.7V391.3" fill="none" stroke="#8c6b1c" />
    </g>
    <g>
      <path d="M238.5 667V652" stroke="#0aa52a" strokeWidth="1.3" />
      <path d="M238.5 642L244 652Q238.5 656 233 652Z" fill="#0a8a16" />
      <path d="M238.5 667L229 672" stroke="#1414b4" strokeWidth="1.2" />
      <path d="M217 679L221 669L228 672V680Z" fill="#0a0a96" />
      <path d="M238.5 667L249 672" stroke="#c01414" strokeWidth="1.2" />
      <path d="M260 679L255.5 669L249 672V680Z" fill="#a80a0a" />
      <text x="234" y="641" fontSize="12" fill="#2fe03a" fontFamily="Liberation Sans, sans-serif">Y</text>
      <text x="209" y="686" fontSize="12" fill="#2a2af0" fontFamily="Liberation Sans, sans-serif">Z</text>
      <text x="260" y="686" fontSize="12" fill="#f02a2a" fontFamily="Liberation Sans, sans-serif">X</text>
    </g>
  </svg>
);

const ViewCube = () => (
  <div className="absolute top-10 right-3">
    <svg width="76" height="80" viewBox="0 0 76 80" fill="none" role="img" aria-label="View cube">
      <defs><radialGradient id="shade"><stop offset="0" stopColor="#5d6b80" stopOpacity="0.7" /><stop offset="1" stopColor="#5d6b80" stopOpacity="0" /></radialGradient></defs>
      <ellipse cx="38" cy="50" rx="36" ry="26" fill="url(#shade)" />
      <path d="M38 4L67 17.5L38 34L9 17.5Z" fill="#c3ccd9" stroke="#707a88" />
      <path d="M9 17.5L38 34V67.5L13 50Z" fill="#bcc5d4" stroke="#707a88" />
      <path d="M67 17.5L38 34V67.5L64 50Z" fill="#c6cedb" stroke="#707a88" />
      <path d="M32 30L38 27L44 30V36L38 40L32 36Z" fill="#a9bdd4" fillOpacity="0.7" />
      <g fill="#7d8692" fontFamily="Liberation Sans, sans-serif" fontWeight="bold">
        <text transform="translate(31 16) rotate(14)" fontSize="7">TOP</text>
        <text transform="translate(12 40) skewY(27)" fontSize="7">FRONT</text>
        <text transform="translate(42 53) skewY(-27)" fontSize="7">RIGHT</text>
      </g>
    </svg>
  </div>
);

const NavItem = ({ label, children }: { label: string; children: React.ReactNode }) => (
  <button type="button" aria-label={label} className="flex h-6 w-6 items-center justify-center">{children}</button>
);
const N = "#6f7a8a";
const NavCaret = () => <span className="flex h-[18px] items-center"><Caret color={N} /></span>;

const NavBar = () => (
  <div className="absolute top-[122px] right-0 flex h-[232px] w-9 flex-col items-center rounded-lg border-2 border-[#8592a6] bg-[#bfcad9]/80">
    <button type="button" aria-label="Close navigation bar" className="mt-0.5 mr-0.5 self-end"><Svg w={9} h={9}><circle cx="4.5" cy="4.5" r="4.3" fill={N} /><path d="M2.8 2.8L6.2 6.2M6.2 2.8L2.8 6.2" stroke="#e8edf3" strokeWidth="1.2" /></Svg></button>
    <div className="mt-2.5">
      <NavItem label="Steering wheel"><Svg w={22} h={22}><path d="M11 .8H21.2V11A10.2 10.2 0 1 1 11 .8Z" fill="#d7dee8" stroke={N} strokeWidth="1.3" /><circle cx="11" cy="11" r="6.5" fill="#c3cddb" stroke={N} strokeWidth="1.2" /><circle cx="11" cy="11" r="4" fill="#e3e8ef" stroke={N} /></Svg></NavItem>
    </div>
    <NavCaret />
    <span className="-mt-0.5 mb-1.5 h-px w-[26px] shrink-0 bg-[#8592a6]" />
    <NavItem label="Pan">
      <Svg w={24} h={24}><path d="M7 22C5 19 3 16 1.5 13.5C1 12 3 11.3 4 12.7L6.5 15L4.8 6C4.6 4.2 7 3.9 7.4 5.5L9.3 11L9.4 3C9.5 1.3 12 1.3 12.1 3L12.6 10.5L14.7 3.6C15.2 2.2 17.4 2.7 17.1 4.3L16 11.5L19.5 7C20.6 5.8 22.4 7 21.6 8.5C20 12 19 18 17 22Z" fill="#e1e6ed" stroke={N} strokeWidth="1.2" /></Svg>
    </NavItem>
    <div className="mt-2">
      <NavItem label="Zoom"><Svg w={24} h={24}><path d="M1.7 1.7H11L16 6.5V19.3H1.7Z" fill="#dde3eb" stroke={N} strokeWidth="1.3" /><path d="M11 2V7H16" stroke={N} /><circle cx="15.5" cy="15" r="5" fill="#d4dfec" stroke={N} strokeWidth="1.4" /><path d="M19 18.5L23 22.5" stroke={N} strokeWidth="2.6" /></Svg></NavItem>
    </div>
    <NavCaret />
    <NavItem label="Orbit"><Svg w={24} h={24}><path d="M12 1C15 1 16 6 16 12S15 23 12 23S8 18 8 12S9 1 12 1Z" fill="#d7dee8" stroke={N} strokeWidth="1.3" /><ellipse cx="12" cy="12.5" rx="11" ry="4" stroke={N} strokeWidth="1.3" /><path d="M12 9V15M9 12H15" stroke={N} strokeWidth="1.3" /><path d="M14 3L18 7H13ZM22 8V13H17Z" fill={N} /></Svg></NavItem>
    <NavCaret />
    <NavItem label="Look at"><Svg w={24} h={24}><path d="M3 8L9 2L8 7L19 3L18 8" fill="#dde3eb" stroke={N} strokeWidth="1.2" /><path d="M.8 8.8H23.2V22.2H.8Z" fill="#dde3eb" stroke={N} strokeWidth="1.3" /><path d="M5.5 12.5H18.5V18.5H5.5Z" fill="#a9b5c6" stroke={N} strokeWidth="1.3" /></Svg></NavItem>
    <button type="button" aria-label="Customize navigation bar" className="mt-auto mr-0.5 mb-1 self-end"><Svg w={9} h={9}><circle cx="4.5" cy="4.5" r="3.9" fill="#d2dae5" stroke={N} /><path d="M2.2 3.5H6.8M2.5 5.5H6.5" stroke={N} /></Svg></button>
  </div>
);

const Viewport = () => (
  <main className="relative min-h-0 flex-1 bg-[linear-gradient(to_bottom,transparent_80%,rgba(134,152,180,0.35)),radial-gradient(ellipse_72%_110%_at_53%_76%,#dae6f8_0%,#d8e4f5_14%,#ccd9eb_35%,#bfcddf_52%,#b5c4d8_62%,#a5b5cc_73%,#9eaec5_80%,#99a7bf_90%,#93a2ba_100%)]">
    <div className="absolute inset-0"><Scene /></div>
    <div className="absolute top-1.5 right-0.5 flex items-center gap-2">
      <button type="button" aria-label="Arrange windows"><Svg w={12} h={11}><path d="M.7.7H11.3V10.3H.7ZM6 .7V10.3M6 5.5H11.3" stroke="#444" strokeWidth="1.4" /></Svg></button>
      <button type="button" aria-label="Close view"><Svg w={12} h={11}><path d="M1.5 1L10.5 10M10.5 1L1.5 10" stroke="#444" strokeWidth="1.8" /></Svg></button>
    </div>
    <ViewCube />
    <NavBar />
  </main>
);

const DocumentTabs = () => (
  <div className="flex h-6 shrink-0 items-stretch bg-[#d9d9d9]">
    <button type="button" aria-label="Home" className="flex w-8 items-start justify-center pt-0.5"><HomeIcon /></button>
    <div className="flex w-[114px] items-center justify-between border-b-[3px] border-[#35a8df] bg-[#efefef] pr-3 pl-2 text-[12px] text-[#1a8fd0]">
      Assembly1.iam
      <button type="button" aria-label="Close document"><Svg w={9} h={9}><path d="M1 1L8 8M8 1L1 8" stroke="#555" strokeWidth="1.7" /></Svg></button>
    </div>
    <button type="button" aria-label="Document menu" className="mr-[5px] ml-auto"><Svg w={14} h={12}><path d="M0 1H14M0 6H14M0 11H14" stroke="#555" strokeWidth="1.6" /></Svg></button>
  </div>
);

export default function App() {
  return (
    <div className="flex h-screen flex-col overflow-hidden bg-[#eeeeee] font-['Roboto','Noto_Sans',sans-serif]">
      <TitleBar />
      <RibbonTabs />
      <Ribbon />
      <div className="flex min-h-0 flex-1">
        <Browser />
        <div className="flex min-w-0 flex-1 flex-col">
          <div className="flex min-h-0 flex-1">
            <div className="w-1 shrink-0 bg-gradient-to-b from-[#ededed] to-[#9fa2a8]" />
            <Viewport />
          </div>
          <DocumentTabs />
        </div>
      </div>
      <footer className="flex h-[25px] shrink-0 items-end bg-[#eeeeee]">
        <div className="flex h-0.5 w-full bg-[#444]"><span className="ml-[370px] w-9 bg-[#777]" /></div>
      </footer>
    </div>
  );
}
